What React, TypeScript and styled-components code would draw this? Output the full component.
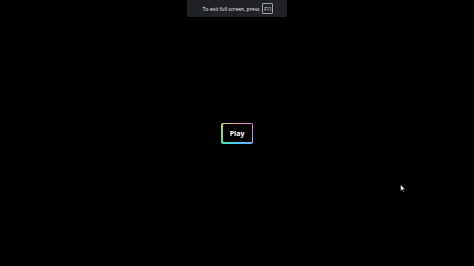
import React from "react";
import styled, { createGlobalStyle } from "styled-components";

const GlobalStyle = createGlobalStyle`
  html, body {
    margin: 0;
    padding: 0;
    background: #000;
  }
  body {
    font-family: "Segoe UI", "Open Sans", "Liberation Sans", sans-serif;
  }
`;

const Screen = styled.div`
  position: relative;
  width: 474px;
  height: 266px;
  background: #000;
  display: flex;
  flex-direction: column;
  align-items: center;
  overflow: hidden;
`;

const Toast = styled.div`
  position: absolute;
  top: 0;
  left: 187px;
  width: 100px;
  height: 17px;
  background: #202124;
  border-radius: 0 0 2px 2px;
  display: flex;
  align-items: center;
  justify-content: center;
  gap: 3px;
  padding-left: 2px;
  box-sizing: border-box;
  color: #e8eaed;
  font-size: 5.2px;
  letter-spacing: -0.05px;
`;

const Key = styled.span`
  display: inline-flex;
  align-items: center;
  justify-content: center;
  width: 11px;
  height: 11px;
  border: 1px solid #9aa0a6;
  border-radius: 1px;
  font-size: 4.6px;
  letter-spacing: -0.1px;
  box-sizing: border-box;
`;

const Stage = styled.div`
  flex: 1;
  display: flex;
  align-items: center;
  justify-content: center;
`;

const PlayButton = styled.button`
  width: 32px;
  height: 21px;
  padding: 1.5px;
  border: none;
  border-radius: 2px;
  background: conic-gradient(
    from 200deg,
    #3ad1ff,
    #7bdc7a,
    #e8d36a,
    #ff7ab5,
    #c98cff,
    #5fb8ff,
    #3ad1ff
  );
  cursor: pointer;
`;

const PlayInner = styled.span`
  display: flex;
  align-items: center;
  justify-content: center;
  width: 100%;
  height: 100%;
  background: #000;
  border-radius: 1px;
  color: #fff;
  font-family: "Segoe UI", "Open Sans", "Liberation Sans", sans-serif;
  font-weight: 700;
  font-size: 7px;
`;

const Cursor = styled.svg`
  position: absolute;
  left: 400px;
  top: 184px;
`;

export default function App() {
  return (
    <>
      <GlobalStyle />
      <Screen>
        <Toast>
          <span>To exit full screen, press</span>
          <Key>F11</Key>
        </Toast>
        <Stage>
          <PlayButton>
            <PlayInner>Play</PlayInner>
          </PlayButton>
        </Stage>
        <Cursor width="6" height="9" viewBox="0 0 6 9">
          <path d="M0.5 0.5 L0.5 7 L2 5.6 L3.2 8.2 L4 7.8 L2.9 5.3 L5 5.3 Z" fill="#fff" stroke="#000" strokeWidth="0.5" />
        </Cursor>
      </Screen>
    </>
  );
}
